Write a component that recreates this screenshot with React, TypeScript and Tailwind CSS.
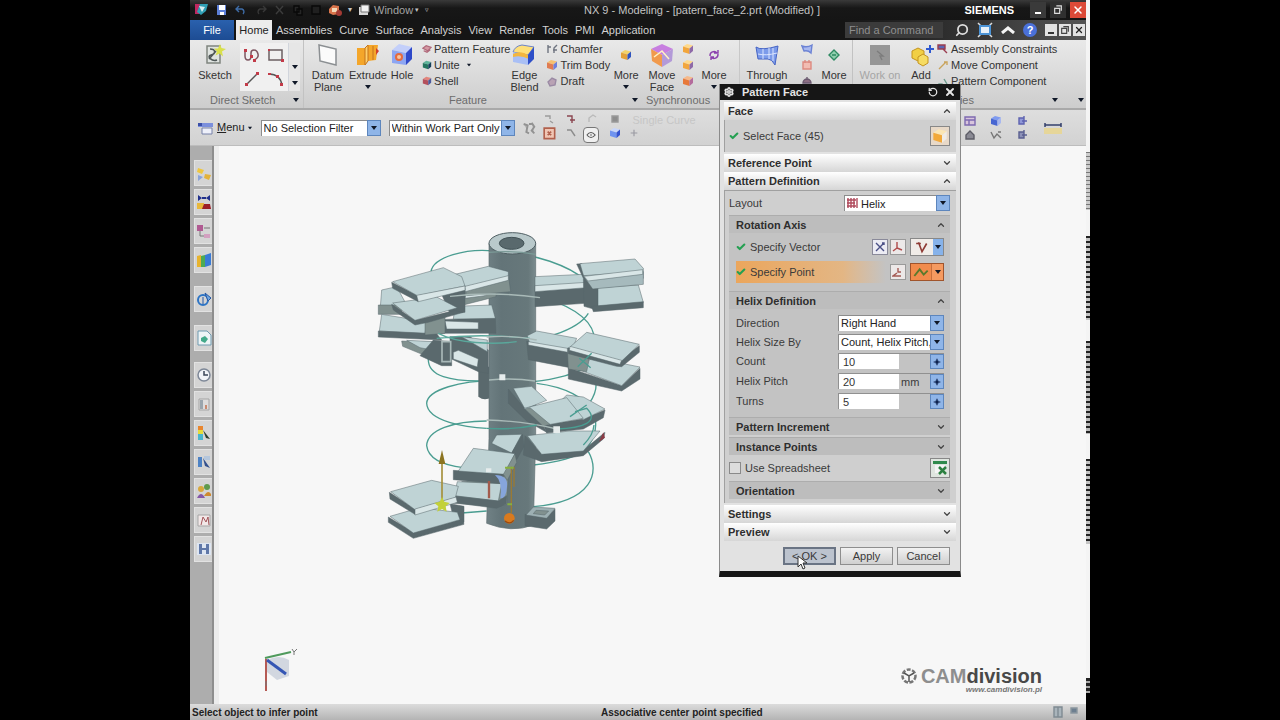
import type { ReactNode } from "react";
import { Check, ChevronDown, ChevronUp, Search, RotateCcw, X, Settings } from "lucide-react";

/* ---------- small shared bits ---------- */

function Caret({ className = "" }: { className?: string }) {
  return (
    <svg viewBox="0 0 6 4" className={`h-1 w-1.5 shrink-0 fill-gray-900 ${className}`}>
      <path d="M0 0h6L3 4z" />
    </svg>
  );
}

interface CubeProps {
  top: string;
  left: string;
  right: string;
  className?: string;
}

function Cube({ top, left, right, className = "size-3" }: CubeProps) {
  return (
    <svg viewBox="0 0 24 24" className={`${className} shrink-0`}>
      <path d="M2 7 10 2l12 3-7 6z" fill={top} />
      <path d="M2 7l13 4v11L2 18z" fill={left} />
      <path d="M15 11l7-6v11l-7 6z" fill={right} />
    </svg>
  );
}

interface GlyphProps {
  d: string;
  color: string;
  fill?: string;
  className?: string;
}

function Glyph({ d, color, fill = "none", className = "size-3" }: GlyphProps) {
  return (
    <svg viewBox="0 0 12 12" className={`${className} shrink-0`} fill={fill} stroke={color} strokeWidth="1.4">
      <path d={d} />
    </svg>
  );
}

/* ---------- title bar and tabs ---------- */

function TitleBar() {
  return (
    <div className="flex h-5 items-center bg-linear-to-b from-[#3a3a3a] via-[#171717] via-40% to-[#151515] pl-1 text-[11px] text-[#c4c4c4]">
      <div className="flex w-[390px] shrink-0 items-center gap-1.5">
        <svg viewBox="0 0 16 14" className="h-3.5 w-4">
          <path d="M1 1h5l2 5-3 5H1z" fill="#c02860" />
          <path d="M6 1h8l-2 7-5 4-4-3z" fill="#2f9fb5" />
          <path d="m5 3 6 1-3 5z" fill="#d9eef2" />
        </svg>
        <svg viewBox="0 0 12 12" className="size-3">
          <path d="M1 1h9v10H1z" fill="#5c7fd8" />
          <path d="M3 1h6v5H3zM4 8h4v3H4z" fill="#fff" />
        </svg>
        <Glyph d="M2 5h6a3 3 0 0 1 1 5M5 2 2 5l3 3" color="#3f6da8" />
        <Glyph d="M10 5H4a3 3 0 0 0-1 5M7 2l3 3-3 3" color="#383838" className="ml-1 size-3" />
        <Glyph d="m2 2 7 8M9 2 2 10" color="#3c3c3c" />
        <Glyph d="M2 2h5v6H2zM5 5h5v6H5z" color="#090909" fill="#262626" />
        <Glyph d="M2 2h8v8H2z" color="#090909" fill="#202020" />
        <svg viewBox="0 0 14 12" className="h-3 w-3.5">
          <path d="M1 5 5 1l6 1v8l-6 1-4-2z" fill="#d9754c" />
          <path d="M4 4h5v4H4z" fill="#f3d9ba" />
          <circle cx="11" cy="9" r="3" fill="#a33a34" />
        </svg>
        <span className="text-[8px]">▾</span>
        <svg viewBox="0 0 12 12" className="size-3">
          <path d="M1 3h9v8H1z" fill="#d8d8d8" />
          <path d="M3 1h8v7H3z" fill="#f2f2f2" stroke="#777" />
        </svg>
        <span className="-ml-0.5 text-[#a4a4a4]">Window</span>
        <span className="-ml-1 text-[7px]">▾</span>
        <span className="text-[7px]">▿</span>
      </div>
      <h1 className="grow text-[11px] whitespace-nowrap">NX 9 - Modeling - [patern_face_2.prt (Modified) ]</h1>
      <span className="mr-4 text-[11px] font-bold text-white">SIEMENS</span>
      <div className="flex gap-1">
        <button aria-label="Minimize" className="flex h-4 w-4 items-end justify-center bg-[#3a3a3a] pb-1">
          <span className="h-0.5 w-1.5 bg-white" />
        </button>
        <button aria-label="Restore" className="flex h-4 w-4 items-center justify-center bg-[#303030]">
          <Glyph d="M4 1h6v6M2 4h6v6H2z" color="#ddd" className="size-2.5" />
        </button>
        <button aria-label="Close" className="flex h-4 w-4 items-center justify-center bg-[#dc4a38]">
          <X className="size-3 text-white" strokeWidth={3} />
        </button>
      </div>
    </div>
  );
}

const TABS = ["Assemblies", "Curve", "Surface", "Analysis", "View", "Render", "Tools", "PMI", "Application"];

function TabBar() {
  return (
    <div className="flex h-5 items-stretch bg-[#151515] text-[11px] text-[#d2d2d2]">
      <button className="w-11 bg-linear-to-b from-[#2a61ae] to-[#1d4c93] text-white">File</button>
      <button className="mr-1 ml-0.5 w-9 bg-[#ececec] text-[#222]">Home</button>
      <nav className="flex grow items-center gap-[7px]">
        {TABS.map((tab) => (
          <button key={tab}>{tab}</button>
        ))}
      </nav>
      <div className="flex items-center gap-2 bg-linear-to-r from-[#151515] via-[#333] to-[#555] pr-px">
        <input
          aria-label="Find a Command"
          placeholder="Find a Command"
          className="h-4 w-[98px] bg-[#3b3b3b] px-1 text-[11px] text-white placeholder:text-[#8f8f8f]"
        />
        <Search className="ml-1 size-3.5 -scale-x-100 text-[#dedede]" strokeWidth={3} />
        <svg viewBox="0 0 16 16" className="size-4">
          <path d="M1 1l4 4M15 1l-4 4M1 15l4-4M15 15l-4-4" stroke="#ddd" strokeWidth="1.5" />
          <path d="M3 4h10v8H3z" fill="#e8f1fa" stroke="#4b93d6" strokeWidth="2" />
        </svg>
        <svg viewBox="0 0 14 8" className="h-2 w-3.5">
          <path d="M1 7l6-5 6 5" stroke="#f4f4f4" strokeWidth="3" fill="none" />
        </svg>
        <span className="flex size-3.5 items-center justify-center rounded-full bg-[#4a70d8] text-[11px] font-bold text-white">
          ?
        </span>
        <div className="flex gap-0.5">
          <button aria-label="Minimize part" className="flex h-3 w-3 items-end justify-center bg-[#e2e2e2] pb-0.5">
            <span className="h-0.5 w-1.5 bg-[#333]" />
          </button>
          <button aria-label="Restore part" className="flex h-3 w-3 items-center justify-center bg-[#e2e2e2]">
            <Glyph d="M4 2h6v6M2 4h6v6H2z" color="#444" className="size-2.5" />
          </button>
          <button aria-label="Close part" className="flex h-3 w-3 items-center justify-center bg-[#e2e2e2]">
            <X className="size-2.5 text-[#222]" strokeWidth={3} />
          </button>
        </div>
      </div>
    </div>
  );
}

/* ---------- ribbon ---------- */

interface BigButtonProps {
  label: string;
  icon: ReactNode;
  className: string;
  caret?: boolean;
}

function BigButton({ label, icon, className, caret = false }: BigButtonProps) {
  return (
    <button className={`flex shrink-0 flex-col items-center leading-3 ${className}`}>
      <span className="flex h-7 items-center">{icon}</span>
      <span>{label}</span>
      {caret && <Caret className="mt-1" />}
    </button>
  );
}

function SmallButton({ label, icon, caret = false }: { label: string; icon: ReactNode; caret?: boolean }) {
  return (
    <button className="flex h-4 items-center gap-0.5 whitespace-nowrap">
      {icon}
      <span>{label}</span>
      {caret && <Caret className="ml-1 scale-75" />}
    </button>
  );
}

function Group({ title, className, children }: { title: ReactNode; className: string; children: ReactNode }) {
  return (
    <section className={`flex shrink-0 flex-col ${className}`}>
      <div className="flex h-[54px] pt-px">{children}</div>
      <div className="flex h-3 items-center text-[#6c6c6c]">{title}</div>
    </section>
  );
}

const blueCube = { top: "#c8d6fb", left: "#6f93f0", right: "#3352cf" };
const orangeCube = { top: "#ffd98a", left: "#f2a63c", right: "#8e6aa8" };

function Ribbon() {
  return (
    <div className="flex h-[70px] overflow-hidden border-b-2 border-[#a9a9a9] bg-linear-to-b from-[#e9e9e9] to-[#cdcdcd] text-[11px] text-[#333]">
      <Group
        className="w-[113px]"
        title={
          <>
            <span className="pl-5">Direct Sketch</span>
            <Caret className="mr-1 ml-auto" />
          </>
        }
      >
        <BigButton
          label="Sketch"
          className="w-[50px]"
          icon={
            <svg viewBox="0 0 24 24" className="size-6">
              <path d="M4 3h13v17H4z" fill="#dfe3e0" stroke="#80857f" strokeWidth="1.5" />
              <path d="M7 6c6 0 6 5 1 6s1 7 6 5M6 16l7-8" stroke="#4f5757" fill="none" strokeWidth="1.6" />
              <path d="m17 1 1.500 4 4.500 1-4 2.500 1 5-3.500-3-4 2 1.500-4-3-3h4z" fill="#d9e04c" />
            </svg>
          }
        />
        <div className="mt-0.5 grid h-12 w-12 grid-cols-2 place-items-center bg-[#f0f0f0]">
          <svg viewBox="0 0 18 16" className="h-4 w-4.5">
            <path d="M2 4v5q0 4 3 4t3-4V6q0-3 3-3t4 4-4 6" fill="none" stroke="#7d5560" strokeWidth="1.5" />
            <path d="M1 2h3v3H1zM7 8h3v3H7zM10 12h3v3h-3z" fill="#c23a48" />
          </svg>
          <svg viewBox="0 0 18 16" className="h-4 w-4.5">
            <path d="M2 3h13v10H2z" fill="none" stroke="#6b5f62" strokeWidth="1.5" />
            <path d="M1 2h2v2H1zM14 12h3v3h-3z" fill="#c23a48" />
          </svg>
          <svg viewBox="0 0 16 16" className="size-4">
            <path d="M2 14 14 2" stroke="#555" strokeWidth="1.5" />
            <path d="M1 12h3v3H1zM12 1h3v3h-3z" fill="#c23a48" />
          </svg>
          <svg viewBox="0 0 16 16" className="size-4">
            <path d="M1 3q11 0 13 11" fill="none" stroke="#555" strokeWidth="1.5" />
            <path d="M0 2h3v2H0zM8 4h3v3H8zM12 12h3v3h-3z" fill="#c23a48" />
          </svg>
        </div>
        <div className="mt-0.5 grid h-12 w-3 grid-rows-3 place-items-center border-l border-gray-300 bg-[#e6e6e6]">
          <span />
          <Caret />
          <Caret />
        </div>
      </Group>

      <Group
        className="w-[339px] border-l border-[#c2c2c2]"
        title={
          <>
            <span className="ml-auto">Feature</span>
            <Caret className="mr-1 ml-auto" />
          </>
        }
      >
        <BigButton
          label="Datum Plane"
          className="ml-1 w-10"
          icon={
            <svg viewBox="0 0 24 24" className="size-6">
              <path d="m3 2 17 4v16L4 18z" fill="#fbfbfb" stroke="#8b8f92" strokeWidth="1.5" />
            </svg>
          }
        />
        <BigButton
          label="Extrude"
          className="w-10"
          caret
          icon={
            <svg viewBox="0 0 24 24" className="size-6">
              <path d="M1 5h8l3-3h10l-2 15-8 1-3 4H1z" fill="#f4a62a" />
              <path d="M9 5v17l3-4V2zM17 3v14" stroke="#c4731c" fill="#ffd06b" />
              <path d="M23 8l-3-3v7z" fill="#d1402a" />
            </svg>
          }
        />
        <BigButton
          label="Hole"
          className="w-7"
          icon={
            <svg viewBox="0 0 24 24" className="size-6">
              <path d="M2 7 9 1l13 3-5 6z" fill="#c3cffa" />
              <path d="M2 7l14 3v12L2 20z" fill="#8da6f2" />
              <path d="M16 10l6-6v12l-6 6z" fill="#2f49c9" />
              <circle cx="9" cy="14" r="4" fill="#e66a3c" />
              <circle cx="9" cy="14" r="2" fill="#f7c59f" />
            </svg>
          }
        />
        <div className="ml-1.5 w-[90px]">
          <SmallButton label="Pattern Feature" icon={<Glyph d="M1 5l4-3 6 2-4 4zM2 8l4 2 4-3" color="#b06a7c" fill="#d69aa4" className="h-3 w-2.5" />} />
          <SmallButton label="Unite" caret icon={<Cube top="#5fb59b" left="#24755f" right="#143f5a" className="h-3 w-2.5" />} />
          <SmallButton label="Shell" icon={<Cube top="#e2857c" left="#b4505c" right="#4a5a9c" className="h-3 w-2.5" />} />
        </div>
        <BigButton
          label="Edge Blend"
          className="w-7"
          icon={
            <svg viewBox="0 0 24 24" className="size-6">
              <path d="M1 9q2-6 9-7l12 2-6 8z" fill="#ffe07a" stroke="#6b83c9" />
              <path d="M1 9l15 3v10L1 19z" fill="#a9bff5" />
              <path d="M1 11q8-4 15 1l1 4q-8-4-16-2z" fill="#f3b63e" />
              <path d="M16 12l6-8v12l-6 6z" fill="#2e4fc8" />
            </svg>
          }
        />
        <div className="ml-2 w-16">
          <SmallButton label="Chamfer" icon={<Glyph d="M2 2v8M2 4h3M8 10V5l3-3M7 7h4" color="#6f7480" />} />
          <SmallButton label="Trim Body" icon={<Cube top="#f6c071" left="#e07c52" right="#6e7fdc" />} />
          <SmallButton label="Draft" icon={<Glyph d="M2 7l4-4 4 2-1 5-5 1z" color="#9a8aa4" fill="#b9a2b4" />} />
        </div>
        <BigButton label="More" className="w-8" caret icon={<Cube top="#f3d36c" left="#e3a13a" right="#2f54bf" className="size-3" />} />
      </Group>

      <Group className="w-[97px]" title={<span className="pl-1">Synchronous</span>}>
        <BigButton
          label="Move Face"
          className="ml-0.5 w-9"
          icon={
            <svg viewBox="0 0 24 24" className="size-6">
              <path d="M1 6 12 1l11 5-11 6z" fill="#c77ee0" />
              <path d="M1 6l11 6v12L2 18z" fill="#f19a4c" />
              <path d="M12 12l11-6-1 12-10 6z" fill="#b39ad8" />
              <path d="m4 14 8-6 7 8" stroke="#fff2c4" strokeWidth="1.500" fill="none" />
            </svg>
          }
        />
        <div className="flex w-4 flex-col items-center gap-1 pt-0.5">
          <Cube {...orangeCube} />
          <Cube {...orangeCube} />
          <Cube top="#f6b98a" left="#e7793a" right="#b46b9c" />
        </div>
        <BigButton label="More" className="w-9" caret icon={<Glyph d="M2 7a4 4 0 0 1 7-3M10 5a4 4 0 0 1-7 3M6 4h4V1M6 8H3v3" color="#8b3fae" />} />
      </Group>

      <Group className="w-[113px] border-l border-[#c8c8c8]" title={null}>
        <BigButton
          label="Through"
          className="ml-0.5 w-[50px]"
          icon={
            <svg viewBox="0 0 24 24" className="size-6">
              <path d="M1 4q5 4 22-1l-3 19q-3-6-7-6H3z" fill="#7c9bea" stroke="#4664c4" />
              <path d="M3 11q8 2 19-1M8 6v10M14 5v11M18 5v13" stroke="#dbe5ff" fill="none" />
            </svg>
          }
        />
        <div className="ml-2 flex w-3.5 flex-col items-center gap-1 pt-0.5">
          <Glyph d="M1 3q5 2 10-1l-1 8q-3-3-7-2z" color="#6c83d4" fill="#a9b9f0" />
          <Glyph d="M2 3h8v7H2zM4 1v3M8 1v3" color="#dd8a80" fill="#f2bcb2" />
          <Glyph d="M2 8a4 4 0 0 1 8 0zM6 2v3" color="#6b5a70" fill="#8d6f84" />
        </div>
        <BigButton label="More" className="ml-1 w-8" icon={<Glyph d="M6 1l5 5-5 5-5-5zM4 6h4" color="#2e8a62" fill="#8fcfae" />} />
      </Group>

      <Group
        className="grow border-l border-[#c2c2c2]"
        title={
          <>
            <span className="w-[121px] text-right">Assemblies</span>
            <Caret className="ml-auto" />
            <Caret className="mr-0.5 ml-5" />
          </>
        }
      >
        <BigButton
          label="Work on"
          className="ml-1.5 w-[42px] text-[#a5a5a5]"
          icon={<span className="flex size-5 items-center justify-center bg-[#969696]"><Glyph d="M3 2l6 5H6l2 4" color="#7c7c7c" /></span>}
        />
        <BigButton
          label="Add"
          className="ml-1 w-8"
          icon={
            <svg viewBox="0 0 26 24" className="h-6 w-6.5">
              <path d="M4 8l6-3 6 3v7l-6 3-6-3z" fill="#f1cf45" stroke="#c49420" />
              <path d="M10 14l5-3 5 3v6l-5 3-5-3z" fill="#f6dc63" stroke="#c49420" />
              <path d="M18 5h3V2h2v3h3v2h-3v3h-2V7h-3z" fill="#2f59d0" />
            </svg>
          }
        />
        <div className="w-28">
          <SmallButton label="Assembly Constraints" icon={<Glyph d="M1 2h7v4H1zM6 6l4 4" color="#9a3c50" fill="#5a67b4" />} />
          <SmallButton label="Move Component" icon={<Glyph d="M2 10l7-7M7 3h3v3" color="#c9a45c" />} />
          <SmallButton label="Pattern Component" icon={<Glyph d="M2 9h3v2H2zM7 4l3 5" color="#6a9a8c" />} />
        </div>
      </Group>
    </div>
  );
}

/* ---------- selection bar ---------- */

function BlueSelect({ label, value, className }: { label: string; value: string; className: string }) {
  return (
    <div className={`relative flex h-4 ${className}`}>
      <select aria-label={label} className="w-full appearance-none border-t border-l border-[#8c8c8c] bg-white pl-0.5 text-[11px] leading-3 text-[#222]">
        <option>{value}</option>
      </select>
      <span className="pointer-events-none absolute top-0 right-0 flex h-4 w-3.5 items-center justify-center border border-[#5d86bd] bg-[#8fb5e8]">
        <Caret className="fill-[#0e2350]" />
      </span>
    </div>
  );
}

function SelectionBar() {
  return (
    <div className="flex h-9 items-center border-b border-[#bdbdbd] bg-linear-to-b from-[#dedede] to-[#d2d2d2] pl-[7px] text-[11px] text-[#222]">
      <button className="mr-2 flex items-center gap-0.5">
        <svg viewBox="0 0 18 14" className="h-3.5 w-4.5">
          <path d="M1 2h15v4H1z" fill="#7b8fdc" />
          <path d="M5 7h10v6H5z" fill="#eef0fa" stroke="#7781a8" />
          <path d="M1 2h4v3H1z" fill="#3b50a8" />
        </svg>
        <span><u>M</u>enu</span>
        <Caret className="scale-75" />
      </button>
      <BlueSelect label="Selection filter" value="No Selection Filter" className="mr-2 w-[120px]" />
      <BlueSelect label="Selection scope" value="Within Work Part Only" className="w-[126px]" />
      <Glyph d="M2 3l3 1-1 5 2 1M8 2l2 3-2 3 2 2M6 3h2" color="#929292" fill="#b4b4b4" className="ml-1.5 size-4" />
      <div className="ml-1.5 grid grid-cols-4 gap-x-2 gap-y-0.5">
        <Glyph d="M2 3h5v3M7 8l3 2" color="#9c9c9c" />
        <Glyph d="M2 3h5v5M5 7h5M7 5v5" color="#8b4650" />
        <Glyph d="M2 9V5l4-3 3 2" color="#bababa" />
        <Glyph d="M3 3h6v6H3z" color="#999" fill="#8d8d8d" />
        <Glyph d="M1 1h9v9H1zM4 4l3 3M7 4 4 7" color="#b1604c" fill="#f0c6b4" className="size-3.5" />
        <Glyph d="M2 3h4l4 6" color="#8c8c8c" />
        <span className="-ml-1 flex size-4 items-center justify-center rounded-sm border border-[#777] bg-[#f0f0f0]">
          <Glyph d="M1 6q5-6 10 0-5 6-10 0M5 6h2" color="#555" className="size-2.5" />
        </span>
        <Cube {...blueCube} />
      </div>
      <div className="ml-1.5 flex flex-col self-stretch pt-0.5 leading-4 text-[#c6c6c6]">
        <span className="pl-1">Single Curve</span>
        <Glyph d="M6 2v8M2 6h8" color="#9a9aa2" className="size-2.5" />
      </div>
      <div className="mr-1.5 ml-auto grid grid-cols-3 gap-x-3.5 gap-y-0.5">
        <Glyph d="M1 2h10v8H1zM1 5h10M5 5v5" color="#7d6ab0" fill="#d8c5dc" />
        <Cube top="#7f9bf0" left="#4766d2" right="#a8b8ef" />
        <Glyph d="M3 3h5v6H3zM6 6h5M8 1v4" color="#5d62b0" fill="#9098d8" />
        <Glyph d="M2 6l4-4 4 4v4H2z" color="#5c5c66" fill="#8a8a94" />
        <Glyph d="M1 3l3 6 3-4 4 4M8 3h3" color="#777" />
        <Glyph d="M3 3h5v6H3zM6 6h5M8 1v4" color="#5a5f90" fill="#8c91b8" />
      </div>
      <svg viewBox="0 0 18 14" className="mr-6 ml-2.5 h-3.5 w-4.5">
        <path d="M0 7h18v6H0z" fill="#e6d69a" />
        <path d="M1 4h16M1 2v4M17 2v4" stroke="#34406c" strokeWidth="1.500" />
      </svg>
    </div>
  );
}

/* ---------- resource bar ---------- */

const RESOURCES: { name: string; gap?: string; art: ReactNode }[] = [
  { name: "Assembly Navigator", art: <><path d="m2 3 6 2-2 4-5-2z" fill="#efc63e" /><path d="m9 9 6 1-2 5-5-2z" fill="#e3b23a" /><path d="M2 10l5 2-5 4z" fill="#8aa3d8" /></> },
  { name: "Constraint Navigator", art: <><path d="M2 1l4 3-4 3zM14 1l-4 3 4 3zM6 3h4v2H6z" fill="#20308c" /><path d="M1 9h7v6H1z" fill="#e9b83c" /><path d="M8 10h6l1 5H6z" fill="#9c1f28" /></> },
  { name: "Part Navigator", art: <><path d="M1 2h6v6H1z" fill="#b05a92" /><path d="M4 8v5h4M8 5h6" stroke="#777" fill="none" /><path d="M8 11h6v4H8z" fill="#d3a0c0" /></> },
  { name: "Reuse Library", art: <><path d="M1 4l4-1v12H1z" fill="#e7b32f" /><path d="M5 4l4-1v12H5z" fill="#4dab54" /><path d="M9 3l6-2v12l-6 2z" fill="#3a7bd6" /></> },
  { name: "HD3D Tools", gap: "mt-2.5", art: <><circle cx="7" cy="9" r="5" fill="none" stroke="#2d74c4" strokeWidth="2" /><path d="M7 6v7M9 2l6 5-3 3z" stroke="#2456a4" fill="#6fa6e0" /></> },
  { name: "Internet Explorer", gap: "mt-2.5", art: <><path d="M2 1h9l4 4v10H2z" fill="#edf4f6" stroke="#6f9ab0" /><path d="M5 8l4-2 3 3-3 4-4-2z" fill="#43a98a" /></> },
  { name: "History", gap: "mt-2", art: <><circle cx="8" cy="8" r="6" fill="#f2f4f8" stroke="#7d8797" strokeWidth="1.5" /><path d="M8 4v4h4" stroke="#3b4658" fill="none" strokeWidth="1.5" /></> },
  { name: "Process Studio", art: <><path d="M3 3h10v11H3z" fill="#dcdcdc" stroke="#a5a5a5" /><path d="M4 4h3v9H4z" fill="#9aa5ad" /><path d="M9 9h2v4H9z" fill="#c98a70" /></> },
  { name: "System Materials", art: <><path d="M2 1h5v4H2z" fill="#e8862e" /><path d="M2 5h5v4H2z" fill="#e6dc3a" /><path d="M2 9h5v6H2z" fill="#49b6cc" /><path d="m7 5 7 9-4-1z" fill="#2c3c2c" /></> },
  { name: "System Scenes", art: <><path d="M2 3h4v10H2z" fill="#4d82c4" /><path d="m7 4 7 10-5-2z" fill="#34508c" /><path d="M8 2h6v4H8z" fill="#b4c6dc" /></> },
  { name: "Roles", art: <><circle cx="5" cy="6" r="3" fill="#d8a83c" /><path d="M1 15q4-8 8 0z" fill="#8558a8" /><circle cx="11" cy="4" r="3" fill="#5f9a4c" /><path d="M8 13q4-7 7-2v2z" fill="#cf8a30" /></> },
  { name: "Templates", art: <><path d="M2 3h12v11H2z" fill="#f2e8e8" stroke="#a5a5a5" /><path d="M5 13l2-8 3 5 2-5 1 8" stroke="#a2555a" fill="none" /></> },
  { name: "Touch Panel", art: <><path d="M1 2h14v12H1z" fill="#dde5f1" /><path d="M3 3h3v10H3zM10 3h3v10h-3zM6 7h4v2H6z" fill="#6078a8" /></> },
];

function ResourceBar() {
  return (
    <aside className="flex w-6 shrink-0 flex-col items-end gap-[3px] border-r-2 border-[#8e8e8e] bg-[#adadad] pt-3.5">
      {RESOURCES.map((item) => (
        <button
          key={item.name}
          aria-label={item.name}
          className={`flex h-[26px] w-[18px] shrink-0 items-center justify-center border-y border-l border-[#e2e2e2] bg-[#d4d4d4] ${item.gap ?? ""}`}
        >
          <svg viewBox="0 0 16 16" className="size-4">{item.art}</svg>
        </button>
      ))}
    </aside>
  );
}

/* ---------- model ---------- */

const LIGHT = "#bfd3d5";
const PALE = "#d9e6e7";
const MID = "#81918f";
const DARK = "#5a696d";

const LEFT_FACES: [string, string][] = [
  ["35,195 80,185 110,240 30,258", LIGHT],
  ["25,240 95,240 95,268 25,268", MID],
  ["35,268 170,290 165,326 28,318", LIGHT],
  ["25,318 200,326 215,345 25,336", DARK],
  ["95,348 200,352 215,412 98,364", MID],
  ["110,346 195,350 200,378 150,368", LIGHT],
  ["190,345 245,350 245,422 215,422 150,392", DARK],
  ["240,335 300,335 355,375 355,445 325,440 240,400", DARK],
  ["275,335 352,345 352,380", LIGHT],
  ["250,382 265,376 325,402 322,426 250,402", PALE],
  ["200,284 376,278 378,325 210,325", DARK],
  ["255,244 365,240 376,280 250,282", LIGHT],
  ["225,288 325,292 325,312 230,312", PALE],
  ["165,290 225,265 225,325 165,330", MID],
  ["265,200 378,178 378,215 280,240", MID],
  ["290,198 370,182 345,212 285,220", PALE],
  ["285,183 415,150 422,200 290,212", MID],
  ["255,148 355,124 415,140 415,156 285,186", LIGHT],
  ["285,184 415,152 415,166 285,200", PALE],
  ["215,208 285,190 285,262 240,266", DARK],
  ["65,238 135,286 255,256 280,262 175,292 135,300 70,255", DARK],
  ["68,234 200,216 262,248 135,286", LIGHT],
  ["65,172 140,210 145,230 68,190", DARK],
  ["68,170 220,128 275,155 285,183 142,212", LIGHT],
  ["140,211 285,183 285,196 145,230", PALE],
];

const RIGHT_FACES: [string, string][] = [
  ["495,195 645,185 645,235 495,245", DARK],
  ["495,155 640,148 655,182 495,196", LIGHT],
  ["495,182 650,172 650,188 495,200", PALE],
  ["620,117 636,116 684,186 684,256 642,244 640,160", DARK],
  ["684,188 805,180 820,232 684,244", LIGHT],
  ["665,244 820,230 820,248 670,260", DARK],
  ["630,116 795,102 820,130 820,160 668,180 640,150", LIGHT],
  ["640,152 820,140 820,178 668,192", "#a6babd"],
  ["642,154 818,134 818,148 654,168", PALE],
  ["470,348 605,374 600,428 475,404", DARK],
  ["472,332 500,318 620,340 605,378 480,358", LIGHT],
  ["475,350 605,372 605,384 475,360", PALE],
  ["595,428 755,482 810,430 810,462 755,498 595,462", DARK],
  ["615,430 670,398 810,426 755,482", LIGHT],
  ["592,370 660,390 650,440 595,432", MID],
  ["595,368 745,408 808,362 808,382 755,425 740,424 595,386", DARK],
  ["600,366 650,322 808,358 755,408", LIGHT],
  ["600,364 755,406 750,418 598,376", PALE],
];

const LOWER_FACES: [string, string][] = [
  ["415,492 465,552 520,604 530,622 470,588 415,535", DARK],
  ["430,490 485,484 530,526 465,552", LIGHT],
  ["520,600 640,582 705,555 700,578 640,612 530,624", DARK],
  ["590,510 640,516 705,552 640,584 560,540", LIGHT],
  ["462,550 590,518 640,580 520,602", LIGHT],
  ["465,552 480,548 540,598 520,604", MID],
  ["465,632 515,686 640,676 705,622 700,642 640,692 515,710 460,690", DARK],
  ["472,632 600,618 690,618 640,678 515,688", LIGHT],
  ["365,655 380,630 455,628 425,684", LIGHT],
  ["425,684 458,628 462,665 440,704", DARK],
  ["240,805 275,770 415,752 410,838 380,846 245,834", MID],
  ["262,770 395,776 385,828 252,812", LIGHT],
  ["245,812 385,828 410,812 408,836 380,850 245,832", DARK],
  ["250,736 400,748 395,776 250,764", DARK],
  ["310,670 435,686 405,748 265,738", LIGHT],
  ["400,748 435,686 440,712 412,766", MID],
  ["240,836 282,844 282,892 255,898", DARK],
  ["55,876 130,922 278,882 282,898 130,940 55,892", DARK],
  ["60,874 150,848 262,862 270,884 130,924", LIGHT],
  ["58,802 135,852 135,868 60,822", DARK],
  ["62,800 185,766 265,784 256,818 135,854", LIGHT],
  ["135,852 258,816 262,832 135,870", PALE],
  ["465,868 530,878 555,852 555,888 530,912 465,902", DARK],
  ["490,846 555,850 530,880 468,870", "#9db0b3"],
  ["498,856 536,858 524,870 490,866", MID],
];

function Faces({ faces }: { faces: [string, string][] }) {
  return (
    <g stroke="#56666a" strokeWidth="1.500" strokeLinejoin="round">
      {faces.map(([points, fill]) => (
        <polygon key={points} points={points} fill={fill} />
      ))}
    </g>
  );
}

function Model() {
  return (
    <svg viewBox="0 0 870 960" className="absolute top-[79px] left-[156px] h-[320px] w-[290px]">
      <defs>
        <linearGradient id="shaft">
          <stop offset="0" stopColor="#708185" />
          <stop offset="0.3" stopColor="#637478" />
          <stop offset="0.85" stopColor="#67787b" />
          <stop offset="1" stopColor="#7b8c8f" />
        </linearGradient>
      </defs>
      <g fill="none" stroke="#4a9d91" strokeWidth="4">
        <path d="M183 140C190 95 290 70 370 78C500 84 600 125 645 165" />
        <path d="M500 215C590 235 660 275 672 330" />
        <path d="M655 265C620 320 500 350 430 352" />
        <path d="M175 400C172 450 230 475 380 466M490 470C560 462 620 445 645 428M678 465C684 520 640 560 610 575" />
        <path d="M385 467C270 465 172 495 170 535C172 590 290 608 350 610" />
        <path d="M500 475C580 485 650 515 675 570C684 620 665 655 640 680" />
        <path d="M350 588C250 588 172 615 170 662C175 705 230 722 280 728M490 720C560 712 620 695 645 675" />
        <path d="M655 680C690 740 670 830 490 845M350 858L275 864" />
      </g>
      <path d="M325 425h40v90q-20 15-40 0z" fill={DARK} />
      <path d="M357 55H497V640L490 900Q425 925 350 895L357 640z" fill="url(#shaft)" stroke="#5d6d70" strokeWidth="2" />
      <ellipse cx="427" cy="55" rx="70" ry="32" fill="#b9c9cb" stroke="#4f5f63" strokeWidth="3" />
      <ellipse cx="425" cy="55" rx="37" ry="18" fill="#59696d" stroke="#425256" strokeWidth="3" />
      <Faces faces={LEFT_FACES} />
      <Faces faces={RIGHT_FACES} />
      <Faces faces={LOWER_FACES} />
      <g fill="none" strokeWidth="4">
        <path d="M357 82Q430 76 497 88" stroke="#7b9a97" />
        <path d="M240 214C330 204 430 206 510 218" stroke="#a9bab8" />
        <path d="M205 325C260 355 370 360 440 350M200 340C300 328 400 332 480 340" stroke="#5aa79b" />
        <path d="M350 336Q430 330 500 345M357 465Q430 458 495 468M350 585Q460 588 560 612" stroke="#a9bab8" />
        <path d="M560 612C640 610 690 590 650 550L615 560M628 400l34 28M665 385l-42 40" stroke="#4a9d91" />
        <path d="M350 610Q430 615 500 600M600 575l50-35M640 660q30-30 32-60" stroke="#4a9d91" />
      </g>
      <path d="M700 622l5 16-18 12z" fill="#8b3c46" />
      <path d="M216 690v145" stroke="#a5903c" strokeWidth="5" />
      <path d="M216 675l-10 42h20z" fill="#8c7420" />
      <path d="m216 816 7 14 16 4-12 10 3 16-14-8-14 8 3-16-12-10 16-4z" fill="#c3d13a" />
      <path d="M424 725v140M432 725v60" stroke="#9a7a34" strokeWidth="4" />
      <path d="M357 768v52M400 770v40" stroke="#a35b4c" strokeWidth="7" />
      <path d="M375 750q40 0 36 35-2 35-20 35 8-50-16-70z" fill="#86a5dc" />
      <path d="M405 728h26M412 838h14" stroke="#86b13c" strokeWidth="6" />
      <circle cx="418" cy="880" r="16" fill="#d97a1e" />
      <path d="M405 888q14 12 26-2" stroke="#9a4a10" strokeWidth="4" fill="none" />
      <path d="M388 448h18v18h-18zM550 604h20v20h-20zM348 730h16v12h-16z" fill="#e6ecec" />
      <path d="M216 350h26v60h-26z" fill="none" stroke="#a8b8b8" strokeWidth="5" />
    </svg>
  );
}

function Triad() {
  return (
    <svg viewBox="0 0 40 46" className="absolute bottom-2.5 left-10 h-[46px] w-10">
      <path d="M8 12q12-6 22 0v16l-12 4-10-8z" fill="#d2d7e0" />
      <path d="M6 10 32 4" stroke="#4f9a5c" strokeWidth="2" />
      <path d="M7 11v32" stroke="#b55a54" strokeWidth="2" />
      <path d="m8 12 19 14" stroke="#3556b4" strokeWidth="3" />
      <path d="m33 1 2 3 3-3M35 4v3M7 33v5" stroke="#777" fill="none" />
    </svg>
  );
}

function Watermark() {
  return (
    <div className="absolute right-11 bottom-2.5 flex items-start gap-1">
      <svg viewBox="0 0 16 16" className="mt-0.5 size-4">
        <circle cx="8" cy="8" r="6.500" fill="none" stroke="#777" strokeWidth="2.500" strokeDasharray="4 1.500" />
        <path d="m3 5 5 3 5-3M8 8v6" stroke="#555" strokeWidth="1.500" fill="none" />
      </svg>
      <div className="flex flex-col items-end font-bold">
        <span className="text-[20px] leading-5 text-[#484848]">
          <span className="text-[#8e8e8e]">CAM</span>division
        </span>
        <span className="text-[8px] leading-2 text-[#777] italic">www.camdivision.pl</span>
      </div>
    </div>
  );
}

/* ---------- Pattern Face dialog ---------- */

function SectionHeader({ title, open = false }: { title: string; open?: boolean }) {
  const Icon = open ? ChevronUp : ChevronDown;
  return (
    <button className="flex h-[18px] w-full items-center justify-between bg-linear-to-b from-white to-[#d6d6d6] px-1 font-bold text-[#2e2e2e]">
      {title}
      <Icon className="size-2.5 text-[#444]" strokeWidth={3} />
    </button>
  );
}

function SubHeader({ title, open = false }: { title: string; open?: boolean }) {
  const Icon = open ? ChevronUp : ChevronDown;
  return (
    <button className="flex h-[18px] w-full items-center justify-between border-t border-[#adadad] bg-[#bdbdbd] pr-1 pl-[7px] font-bold text-[#2e2e2e]">
      {title}
      <Icon className="size-2.5 text-[#444]" strokeWidth={3} />
    </button>
  );
}

function Tick() {
  return <Check className="mr-1 size-2.5 text-[#25a052]" strokeWidth={5} />;
}

function Field({ id, label, value, unit }: { id: string; label: string; value: string; unit?: string }) {
  return (
    <div className="flex h-5 items-center pr-1.5 pl-[7px]">
      <label htmlFor={id} className="grow">{label}</label>
      <div className="flex h-4 w-[106px] items-center border-t border-l border-[#909090]">
        <input id={id} defaultValue={value} className="h-full w-[60px] bg-white pl-1 text-[11px] text-[#333]" />
        <span className="grow pl-0.5">{unit}</span>
        <button aria-label={`${label} options`} className="flex h-full w-3.5 items-center justify-center border border-[#5d86bd] bg-[#8fb5e8]">
          <Glyph d="M6 2v8M2 6h8M5 5h2v2H5z" color="#0e2350" className="size-2.5" />
        </button>
      </div>
    </div>
  );
}

function SelectField({ label, value }: { label: string; value: string }) {
  return (
    <div className="flex h-[19px] items-center pr-1.5 pl-[7px]">
      <span className="grow">{label}</span>
      <BlueSelect label={label} value={value} className="w-[106px]" />
    </div>
  );
}

function PatternFaceDialog() {
  return (
    <div
      role="dialog"
      aria-label="Pattern Face"
      className="absolute top-[84px] left-[529px] w-[242px] border-x border-b-[6px] border-[#161616] border-x-[#8b8b8b] bg-[#e2e2e2] text-[11px] leading-3 text-[#3a3a3a]"
    >
      <div className="flex h-4 items-center bg-[#161616] px-1 font-bold text-[#e4e4e4]">
        <Settings className="mr-2 size-2.5" strokeWidth={4} />
        <h2 className="grow">Pattern Face</h2>
        <button aria-label="Reset" className="mr-1.5"><RotateCcw className="size-2.5" strokeWidth={3} /></button>
        <button aria-label="Close dialog"><X className="size-3" strokeWidth={4} /></button>
      </div>

      <div className="px-1 pt-0.5">
        <SectionHeader title="Face" open />
        <div className="mb-0.5 flex h-8 items-center border-l border-[#a0a0a0] bg-[#cfcfcf] pr-1.5 pl-1">
          <Tick />
          <span className="grow">Select Face (45)</span>
          <button aria-label="Face rule" className="flex size-5 items-center justify-center border border-[#888] bg-[#e8d9c8]">
            <Cube top="#fbe6b4" left="#f2a93a" right="#f0ece6" className="size-4" />
          </button>
        </div>
        <SectionHeader title="Reference Point" />
        <SectionHeader title="Pattern Definition" open />

        <div className="mb-0.5 border-t border-l border-[#a0a0a0] bg-[#cfcfcf] px-1 pb-1">
          <div className="flex h-6 items-center pr-0.5">
            <label htmlFor="layout" className="grow">Layout</label>
            <div className="relative h-4 w-[106px]">
              <select id="layout" className="h-4 w-full appearance-none border-t border-l border-[#8c8c8c] bg-white pl-4 leading-3 text-[#222]">
                <option>Helix</option>
              </select>
              <Glyph d="M2 1v10M5 1v10M8 1v10M1 3h9M1 6h8M1 9h9M11 1v10" color="#b04a5c" className="pointer-events-none absolute top-0.5 left-0.5 size-3" />
              <span className="pointer-events-none absolute top-0 right-0 flex h-4 w-3.5 items-center justify-center border border-[#5d86bd] bg-[#8fb5e8]">
                <Caret className="fill-[#0e2350]" />
              </span>
            </div>
          </div>

          <div className="mr-0.5 bg-[#c3c3c3]">
            <SubHeader title="Rotation Axis" open />
            <div className="flex h-7 items-center pr-1.5 pl-[7px]">
              <Tick />
              <span className="grow">Specify Vector</span>
              <button aria-label="Reverse direction" className="mr-0.5 size-4 border border-[#8a8a9a] bg-[#ececf4] p-px">
                <Glyph d="M2 2l8 8M10 2l-8 8M8 2h2v2" color="#4a4f86" />
              </button>
              <button aria-label="Vector dialog" className="mr-1 size-4 border border-[#9a9a9a] bg-[#ece8e8] p-px">
                <Glyph d="M5 1v6l5 2M5 7l-4 3" color="#b04c4c" />
              </button>
              <button aria-label="Vector type" className="flex h-[18px] w-[34px] items-center border border-[#888] bg-[#f0ece8]">
                <Glyph d="M3 2l3 8 4-7M1 3h4" color="#8e3a34" className="mx-1 size-3.5" />
                <span className="flex h-full grow items-center justify-center bg-[#86b2ea]"><Caret /></span>
              </button>
            </div>
            <div className="ml-[7px] flex h-[22px] items-center bg-linear-to-r from-[#eba65c] via-[#e3b684] via-50% to-[#c3c3c3] to-70% pr-1.5">
              <Tick />
              <span className="grow">Specify Point</span>
              <button aria-label="Point dialog" className="mr-1 size-4 border border-[#9a9a9a] bg-[#ece8e8] p-px">
                <Glyph d="M6 2v4h3M5 7l-4 3h8" color="#a45a54" />
              </button>
              <button aria-label="Point type" className="flex h-[18px] w-[34px] items-center border border-[#a0542c] bg-[#f18b4c]">
                <Glyph d="M1 9l4-5 3 4 3-3" color="#5a7a2c" className="mx-0.5 size-4" />
                <span className="flex h-full grow items-center justify-center border-l border-[#c8703c] bg-[#f59a60]"><Caret /></span>
              </button>
            </div>
            <div className="h-2" />
            <SubHeader title="Helix Definition" open />
            <div className="pt-1 pb-1.5">
              <SelectField label="Direction" value="Right Hand" />
              <SelectField label="Helix Size By" value="Count, Helix Pitch, Turns" />
              <Field id="count" label="Count" value="10" />
              <Field id="pitch" label="Helix Pitch" value="20" unit="mm" />
              <Field id="turns" label="Turns" value="5" />
            </div>
            <div className="flex flex-col gap-0.5 bg-[#cfcfcf]">
              <SubHeader title="Pattern Increment" />
              <SubHeader title="Instance Points" />
            </div>
          </div>

          <div className="flex h-[26px] items-center pr-0.5">
            <input id="spreadsheet" type="checkbox" className="mr-1 size-3 appearance-none border border-[#8a8a8a] bg-[#dcdcdc]" />
            <label htmlFor="spreadsheet" className="grow">Use Spreadsheet</label>
            <button aria-label="Spreadsheet" className="flex size-5 items-center justify-center border border-[#888] bg-[#dfe5df]">
              <svg viewBox="0 0 16 16" className="size-4">
                <path d="M1 1h14v3H1z" fill="#2f8a4c" />
                <path d="M3 5h10v8H3z" fill="#f4f4f4" />
                <path d="m7 7 7 7M14 7l-7 7" stroke="#2c8040" strokeWidth="2.500" />
              </svg>
            </button>
          </div>
          <div className="mr-0.5">
            <SubHeader title="Orientation" />
          </div>
        </div>

        <SectionHeader title="Settings" />
        <SectionHeader title="Preview" />

        <div className="flex h-[30px] items-center justify-end gap-1 pr-1.5">
          <button className="h-[18px] w-[53px] border-2 border-[#6a7484] bg-[#bcc3ce]">&lt; OK &gt;</button>
          <button className="h-[18px] w-[53px] border border-[#8e8e8e] bg-linear-to-b from-[#f2f2f2] to-[#d0d0d0]">Apply</button>
          <button className="h-[18px] w-[53px] border border-[#8e8e8e] bg-linear-to-b from-[#f2f2f2] to-[#d0d0d0]">Cancel</button>
        </div>
      </div>

      <svg viewBox="0 0 12 16" className="pointer-events-none absolute bottom-0 left-[77px] h-4 w-3">
        <path d="M1 1v11l3-3 2 5 2-1-2-5h4z" fill="#fff" stroke="#333" />
      </svg>
    </div>
  );
}

/* ---------- window ---------- */

function EdgeNoise() {
  return (
    <div className="flex w-1 shrink-0 flex-col bg-[#f4f4f4]">
      <span className="mt-[152px] h-[58px] bg-[repeating-linear-gradient(#777_0_1px,#ccc_1px_4px)]" />
      <span className="mt-[26px] h-[84px] bg-[repeating-linear-gradient(#222_0_2px,#c4c4c4_2px_5px)]" />
      <span className="mt-[21px] h-[93px] bg-[repeating-linear-gradient(#222_0_2px,#bbb_2px_5px)]" />
      <span className="mt-[25px] h-[85px] bg-[repeating-linear-gradient(#222_0_2px,#c4c4c4_2px_5px)]" />
      <span className="mt-auto h-[15px] bg-[repeating-linear-gradient(#222_0_3px,#aaa_3px_5px)]" />
      <span className="h-[27px] bg-black" />
    </div>
  );
}

export default function App() {
  return (
    <div className="flex min-h-screen bg-black px-[190px] font-['Liberation_Sans',Arial,sans-serif]">
      <div className="relative flex min-w-0 grow flex-col">
        <TitleBar />
        <TabBar />
        <Ribbon />
        <SelectionBar />
        <div className="flex grow">
          <ResourceBar />
          <main className="relative grow border-l-[5px] border-[#ececec] bg-[#f7f7f7]">
            <div className="absolute -left-[5px] top-0">
              <Model />
            </div>
            <Triad />
            <Watermark />
          </main>
        </div>
        <footer className="flex h-4 items-center bg-linear-to-b from-[#dcdcdc] to-[#b4b4b4] px-0.5 text-[10px] font-bold text-[#222]">
          <span className="w-[409px]">Select object to infer point</span>
          <span className="grow">Associative center point specified</span>
          <Glyph d="M2 1h8v10H2zM6 1v10" color="#7f8a92" fill="#a9b4bb" />
          <Glyph d="M3 2h6v5H3z" color="#8a969e" fill="#6d7f90" className="mx-1 size-3" />
        </footer>
        <PatternFaceDialog />
      </div>
      <EdgeNoise />
    </div>
  );
}
